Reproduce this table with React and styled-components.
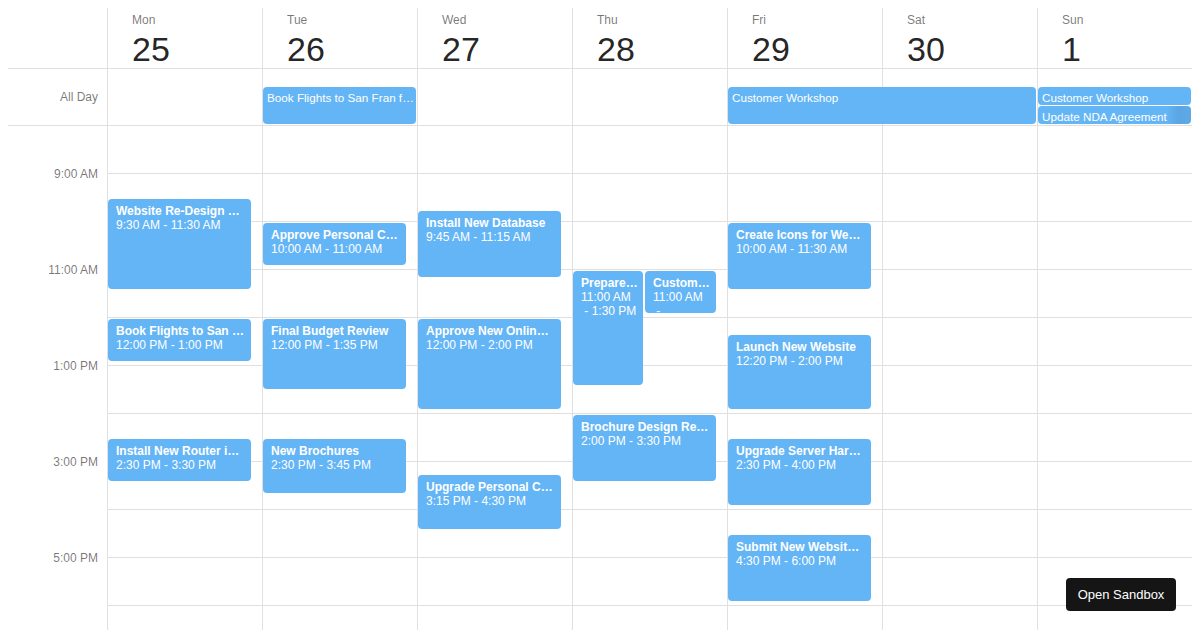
import React from "react";
import styled, { createGlobalStyle } from "styled-components";

const HOUR = 48;
const START_HOUR = 8;
const HOURS = 12;

const days = [
  { name: "Mon", date: 25 },
  { name: "Tue", date: 26 },
  { name: "Wed", date: 27 },
  { name: "Thu", date: 28 },
  { name: "Fri", date: 29 },
  { name: "Sat", date: 30 },
  { name: "Sun", date: 1 },
];

const timeLabels = ["9:00 AM", "11:00 AM", "1:00 PM", "3:00 PM", "5:00 PM", "7:00 PM"];

// all-day groups: column index (0 = Mon) and how many days they span
const allDay = [
  { day: 1, span: 1, items: [{ title: "Book Flights to San Fran for Sales Trip", tall: true }] },
  { day: 4, span: 2, items: [{ title: "Customer Workshop", tall: true }] },
  {
    day: 6,
    span: 1,
    items: [{ title: "Customer Workshop" }, { title: "Update NDA Agreement", fade: true }],
  },
];

const appointments = [
  { day: 0, title: "Website Re-Design Plan", start: 9.5, end: 11.5, from: "9:30 AM", to: "11:30 AM" },
  { day: 0, title: "Book Flights to San Fran for Sales Trip", start: 12, end: 13, from: "12:00 PM", to: "1:00 PM" },
  { day: 0, title: "Install New Router in Dev Room", start: 14.5, end: 15.5, from: "2:30 PM", to: "3:30 PM" },
  { day: 1, title: "Approve Personal Computer Upgrade Plan", start: 10, end: 11, from: "10:00 AM", to: "11:00 AM" },
  { day: 1, title: "Final Budget Review", start: 12, end: 13 + 35 / 60, from: "12:00 PM", to: "1:35 PM" },
  { day: 1, title: "New Brochures", start: 14.5, end: 15.75, from: "2:30 PM", to: "3:45 PM" },
  { day: 2, title: "Install New Database", start: 9.75, end: 11.25, from: "9:45 AM", to: "11:15 AM" },
  { day: 2, title: "Approve New Online Marketing Strategy", start: 12, end: 14, from: "12:00 PM", to: "2:00 PM" },
  { day: 2, title: "Upgrade Personal Computers", start: 15.25, end: 16.5, from: "3:15 PM", to: "4:30 PM" },
  { day: 3, title: "Prepare 2015 Marketing Plan", start: 11, end: 13.5, from: "11:00 AM", to: "1:30 PM", slot: "left" },
  { day: 3, title: "Customer Workshop", start: 11, end: 12, from: "11:00 AM", to: "12:00 PM", slot: "right" },
  { day: 3, title: "Brochure Design Review", start: 14, end: 15.5, from: "2:00 PM", to: "3:30 PM" },
  { day: 4, title: "Create Icons for Website", start: 10, end: 11.5, from: "10:00 AM", to: "11:30 AM" },
  { day: 4, title: "Launch New Website", start: 12 + 20 / 60, end: 14, from: "12:20 PM", to: "2:00 PM" },
  { day: 4, title: "Upgrade Server Hardware", start: 14.5, end: 16, from: "2:30 PM", to: "4:00 PM" },
  { day: 4, title: "Submit New Website Design", start: 16.5, end: 18, from: "4:30 PM", to: "6:00 PM" },
];

const slots = {
  full: { left: 0, width: 143 },
  left: { left: 0, width: 70 },
  right: { left: 72, width: 71 },
};

const App = () => {
  return (
    <>
      <GlobalStyle />
      <Paper>
        <HeaderRow>
          <Corner />
          {days.map((d) => (
            <DayHead key={d.name}>
              <DayName>{d.name}</DayName>
              <DayNumber>{d.date}</DayNumber>
            </DayHead>
          ))}
        </HeaderRow>

        <AllDayRow>
          <AllDayLabel>All Day</AllDayLabel>
          {days.map((d, i) => (
            <AllDayCell key={d.name} $col={i + 2} />
          ))}
          {allDay.map((g) => (
            <AllDayGroup key={g.day} $col={g.day + 2} $span={g.span}>
              {g.items.map((item) => (
                <AllDayItem key={item.title} $tall={item.tall} $fade={item.fade}>
                  {item.title}
                </AllDayItem>
              ))}
            </AllDayGroup>
          ))}
        </AllDayRow>

        <Body>
          <TimeColumn>
            {timeLabels.map((t) => (
              <TimeCell key={t}>{t}</TimeCell>
            ))}
          </TimeColumn>
          {days.map((d, i) => (
            <DayColumn key={d.name}>
              {Array.from({ length: HOURS }).map((_, h) => (
                <HourCell key={h} />
              ))}
              {appointments
                .filter((a) => a.day === i)
                .map((a) => {
                  const s = slots[a.slot || "full"];
                  return (
                    <Appointment
                      key={a.title}
                      $half={!!a.slot}
                      style={{
                        top: (a.start - START_HOUR) * HOUR + 1,
                        height: (a.end - a.start) * HOUR - 6,
                        left: s.left,
                        width: s.width,
                      }}
                    >
                      <Title>{a.title}</Title>
                      <Times>
                        <Time>{a.from}</Time>
                        <Time>{"\u00a0-\u00a0"}</Time>
                        <Time>{a.to}</Time>
                      </Times>
                    </Appointment>
                  );
                })}
            </DayColumn>
          ))}
        </Body>
      </Paper>
      <SandboxButton>Open Sandbox</SandboxButton>
    </>
  );
};

export default App;

const GlobalStyle = createGlobalStyle`
  body {
    margin: 8px;
    background: #fff;
    font-family: "Liberation Sans", Arial, sans-serif;
  }
`;

const Paper = styled.div`
  width: 1184px;
  background: #fff;
  box-shadow: 0px 2px 1px -1px rgba(0, 0, 0, 0.2), 0px 1px 1px 0px rgba(0, 0, 0, 0.14),
    0px 1px 3px 0px rgba(0, 0, 0, 0.12);
`;

const columns = `
  display: grid;
  grid-template-columns: 99px repeat(7, 155px);
`;

const HeaderRow = styled.div`
  ${columns}
  height: 61px;
  box-sizing: border-box;
  border-bottom: 1px solid #e0e0e0;
`;

const Corner = styled.div``;

const DayHead = styled.div`
  border-left: 1px solid #e0e0e0;
  padding-left: 24px;
  padding-top: 6px;
`;

const DayName = styled.div`
  font-size: 12px;
  line-height: 12px;
  color: rgba(0, 0, 0, 0.54);
`;

const DayNumber = styled.div`
  font-size: 34px;
  line-height: 34px;
  margin-top: 6px;
  color: rgba(0, 0, 0, 0.87);
`;

const AllDayRow = styled.div`
  ${columns}
  grid-template-rows: 56px;
  border-bottom: 1px solid #e0e0e0;
`;

const AllDayLabel = styled.div`
  grid-column: 1;
  grid-row: 1;
  display: flex;
  align-items: center;
  justify-content: flex-end;
  padding-right: 9px;
  font-size: 12px;
  color: rgba(0, 0, 0, 0.54);
`;

const AllDayCell = styled.div`
  grid-column: ${(p) => p.$col};
  grid-row: 1;
  border-left: 1px solid #e0e0e0;
`;

const AllDayGroup = styled.div`
  grid-column: ${(p) => p.$col} / span ${(p) => p.$span};
  grid-row: 1;
  align-self: end;
  display: flex;
  flex-direction: column;
  gap: 1px;
  margin: 0 1px 1px 1px;
  min-width: 0;
`;

const AllDayItem = styled.div`
  height: ${(p) => (p.$tall ? "37px" : "18px")};
  box-sizing: border-box;
  background: ${(p) =>
    p.$fade ? "linear-gradient(to right, #64b5f6 84%, #5aa5e2 92%, #5ea9e6)" : "#64b5f6"};
  border-radius: 4px;
  color: #fff;
  font-size: 11.7px;
  line-height: 14px;
  padding: 4px 0 0 4px;
  white-space: nowrap;
  overflow: hidden;
  text-overflow: ellipsis;
`;

const Body = styled.div`
  ${columns}
`;

const TimeColumn = styled.div`
  display: flex;
  flex-direction: column;
`;

const TimeCell = styled.div`
  height: 96px;
  display: flex;
  align-items: center;
  justify-content: flex-end;
  padding-right: 9px;
  font-size: 12px;
  color: rgba(0, 0, 0, 0.54);
`;

const DayColumn = styled.div`
  position: relative;
  border-left: 1px solid #e0e0e0;
`;

const HourCell = styled.div`
  height: 48px;
  box-sizing: border-box;
  border-bottom: 1px solid #e0e0e0;
`;

const Appointment = styled.div`
  position: absolute;
  box-sizing: border-box;
  background: #64b5f6;
  border-radius: 4px;
  color: #fff;
  padding: 5px ${(p) => (p.$half ? "4px" : "6px")} 0 8px;
  overflow: hidden;
  font-size: 12px;
  line-height: 14px;
`;

const Title = styled.div`
  font-weight: bold;
  white-space: nowrap;
  overflow: hidden;
  text-overflow: ellipsis;
`;

const Times = styled.div``;

const Time = styled.span`
  display: inline-block;
  white-space: nowrap;
`;

const SandboxButton = styled.button`
  position: fixed;
  right: 24px;
  bottom: 19px;
  width: 110px;
  height: 33px;
  border: none;
  border-radius: 4px;
  background: #151515;
  color: #fff;
  font-family: "Liberation Sans", Arial, sans-serif;
  font-size: 13px;
  cursor: pointer;
`;
